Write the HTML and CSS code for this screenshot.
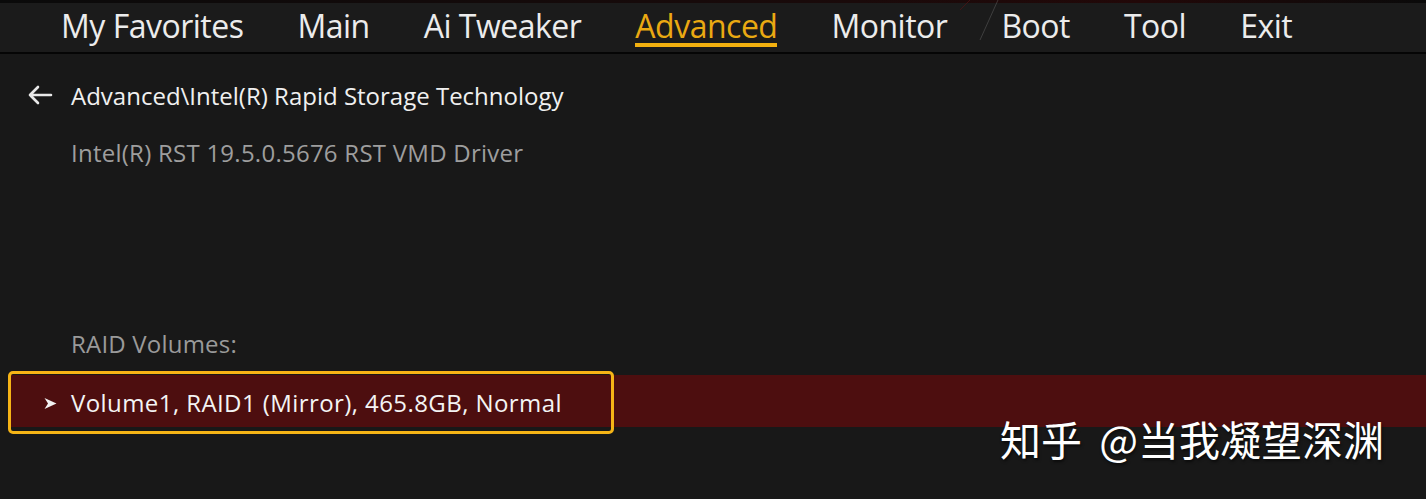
FILE: index.html
```html
<!DOCTYPE html>
<html>
<head>
<meta charset="utf-8">
<link rel="stylesheet" href="styles.css">
</head>
<body>
<div class="page">
  <div class="topline"></div>
  <nav class="menubar">
    <span class="tab">My Favorites</span>
    <span class="tab">Main</span>
    <span class="tab">Ai Tweaker</span>
    <span class="tab active">Advanced</span>
    <span class="tab">Monitor</span>
    <span class="tab">Boot</span>
    <span class="tab">Tool</span>
    <span class="tab">Exit</span>
  </nav>
  <svg class="deco" width="60" height="54" viewBox="0 0 60 54"><path d="M48 0L30 40" stroke="#6a6a6a" stroke-width="1" opacity="0.45" fill="none"/><path d="M20 0L10 10" stroke="#5a1414" stroke-width="1" opacity="0.6" fill="none"/></svg>
  <main class="content">
    <div class="crumb">
      <svg class="back" width="26" height="20" viewBox="0 0 26 20"><path d="M24 10H3M11 2L3 10L11 18" fill="none" stroke="#e8e8e8" stroke-width="2.6" stroke-linecap="round" stroke-linejoin="round"/></svg>
      <span class="crumb-text">Advanced\Intel(R) Rapid Storage Technology</span>
    </div>
    <div class="info">Intel(R) RST 19.5.0.5676 RST VMD Driver</div>
    <div class="label">RAID Volumes:</div>
    <div class="band">
      <div class="selbox">
        <svg class="chev" width="13" height="13" viewBox="0 0 13 13"><path d="M0.5 1L12.5 6.5L0.5 12L4 6.5Z" fill="#f2f2f2"/></svg>
        <span class="seltext">Volume1, RAID1 (Mirror), 465.8GB, Normal</span>
      </div>
    </div>
  </main>
  <div class="watermark">知乎 @当我凝望深渊</div>
</div>
</body>
</html>
```
FILE: styles.css
```css
* { box-sizing: border-box; }
html, body { margin: 0; padding: 0; }
body {
  background: #181818;
  width: 1426px;
  height: 499px;
  overflow: hidden;
  font-family: "Open Sans", "Noto Sans", sans-serif;
}
.page { position: relative; width: 1426px; height: 499px; }
.topline {
  height: 3px;
  background: linear-gradient(90deg, #0a0a0a 0%, #1a0a0a 60%, #220808 80%, #0a0a0a 100%);
}
.menubar {
  height: 51px;
  background: #1b1b1b;
  border-bottom: 2px solid #050505;
  display: flex;
  align-items: flex-start;
  padding-left: 61px;
  gap: 54px;
}
.tab {
  color: #ececec;
  font-size: 32px;
  line-height: 40px;
  padding-top: 3px;
  letter-spacing: -0.5px;
}
.tab.active {
  color: #eaa912;
  border-bottom: 4px solid #f2b00f;
  line-height: 34px;
  padding-top: 6px;
}
.deco {
  position: absolute;
  left: 950px;
  top: 0;
  pointer-events: none;
}
.content { padding-top: 26px; }
.crumb {
  display: flex;
  align-items: center;
  height: 30px;
  padding-left: 27px;
}
.back { margin-right: 18px; }
.crumb-text {
  color: #f0f0f0;
  font-size: 24px;
  letter-spacing: 0;
}
.info {
  margin-top: 28px;
  padding-left: 71px;
  color: #9e9e9e;
  font-size: 24px;
  letter-spacing: 0.25px;
  height: 30px;
  line-height: 30px;
}
.label {
  margin-top: 161px;
  padding-left: 71px;
  color: #9a9a9a;
  font-size: 24px;
  letter-spacing: 0.2px;
  height: 30px;
  line-height: 30px;
}
.band {
  margin-top: 16px;
  margin-left: 8px;
  height: 52px;
  background: #4d0e0f;
  display: flex;
}
.selbox {
  width: 606px;
  height: 63px;
  margin-top: -4px;
  border: 3px solid #f6b416;
  border-radius: 5px;
  display: flex;
  align-items: center;
  padding-left: 33px;
}
.chev { margin-right: 14px; margin-top: 2px; }
.seltext {
  color: #f4f4f4;
  font-size: 24px;
  letter-spacing: 0.42px;
}
.watermark {
  position: absolute;
  left: 1000px;
  top: 410px;
  color: #ffffff;
  font-family: "Noto Sans CJK SC", sans-serif;
  font-size: 41px;
  line-height: 56px;
  word-spacing: 8px;
  text-shadow: 1px 2px 3px rgba(0,0,0,0.6);
  white-space: nowrap;
}
```
